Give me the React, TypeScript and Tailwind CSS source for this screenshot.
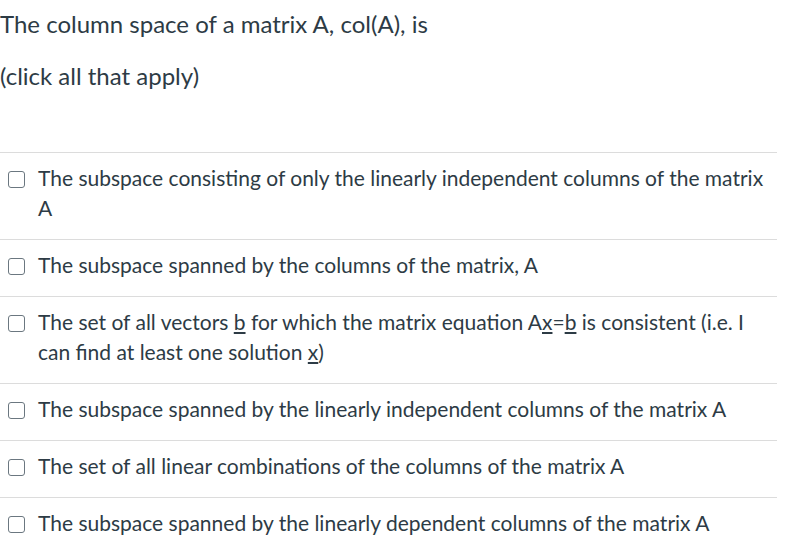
import React from "react";

function Box() {
  return (
    <span className="mt-[8px] h-[17px] w-[17px] shrink-0 rounded-[3px] border-[1.5px] border-[#6b7780] bg-white" />
  );
}

function Row({ children, first }: { children: React.ReactNode; first?: boolean }) {
  return (
    <div className={`flex gap-[13px] border-b border-[#dcdcdc] pt-[10px] pb-[16px] pl-[8px] ${first ? "border-t" : ""}`}>
      <Box />
      <div className="leading-[30px]">{children}</div>
    </div>
  );
}

export default function App() {
  return (
    <div
      className="h-[553px] w-[790px] overflow-hidden bg-white text-[#2d3b45]"
      style={{ fontFamily: "Lato, 'Noto Sans', sans-serif" }}
    >
      <p className="pt-[9px] text-[24px] leading-[30px]">The column space of a matrix A, col(A), is</p>
      <p className="mt-[22px] text-[24px] leading-[30px]">(click all that apply)</p>
      <div className="mt-[61px] w-[777px] text-[21px]">
        <Row first>
          The subspace consisting of only the linearly independent columns of the matrix A
        </Row>
        <Row>The subspace spanned by the columns of the matrix, A</Row>
        <Row>
          The set of all vectors <u>b</u> for which the matrix equation A<u>x</u>=<u>b</u> is consistent (i.e. I can
          find at least one solution <u>x</u>)
        </Row>
        <Row>The subspace spanned by the linearly independent columns of the matrix A</Row>
        <Row>The set of all linear combinations of the columns of the matrix A</Row>
        <Row>The subspace spanned by the linearly dependent columns of the matrix A</Row>
      </div>
    </div>
  );
}
